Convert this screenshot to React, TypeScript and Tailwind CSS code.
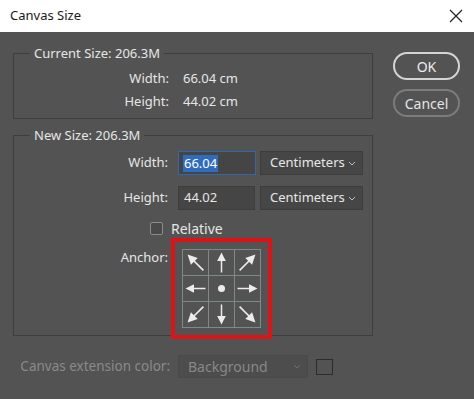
import React from "react";

const font = { fontFamily: '"Noto Sans", "Open Sans", sans-serif' };

function Arrow({ angle, long }: { angle: number; long?: boolean }) {
  return (
    <svg width="25" height="25" viewBox="0 0 25 25">
      <g transform={`rotate(${angle} 12.5 12.5)${long ? " translate(12.5 12.5) scale(1.12) translate(-12.5 -12.5)" : ""}`} fill="#ececec" stroke="none">
        <rect x="11.75" y="9" width="1.5" height="13.5" />
        <polygon points="12.5,2.5 8.2,11 16.8,11" />
      </g>
    </svg>
  );
}

function Cell({ children }: { children?: React.ReactNode }) {
  return (
    <div className="bg-[#535353] w-[25px] h-[25px] flex items-center justify-center">{children}</div>
  );
}

function Chevron({ color }: { color: string }) {
  return (
    <svg width="8" height="5" viewBox="0 0 8 5">
      <path d="M1 1 L4 4 L7 1" fill="none" stroke={color} strokeWidth="1" />
    </svg>
  );
}

export default function App() {
  return (
    <div
      className="w-[474px] h-[399px] bg-[#535353] flex flex-col overflow-hidden text-[#e6e6e6] text-[13px]"
      style={font}
    >
      <div className="h-[32px] bg-white flex items-center justify-between pl-[10px] pr-[11px] shrink-0">
        <span className="text-[13px] text-[#1a1a1a]">Canvas Size</span>
        <svg width="14" height="14" viewBox="0 0 14 14">
          <path d="M1 1 L13 13 M13 1 L1 13" stroke="#222" strokeWidth="1.2" />
        </svg>
      </div>

      <div className="flex">
        <div className="ml-[13px] w-[360px] flex flex-col">
          <fieldset className="mt-[12px] border border-[#3e3e3e] px-0 pb-[5px]">
            <legend className="ml-[16px] px-[4px] leading-[18px]">Current Size: 206.3M</legend>
            <div className="flex flex-col pt-[5px]">
              <div className="flex items-center h-[23px]">
                <span className="w-[155px] text-right">Width:</span>
                <span className="ml-[14px]">66.04 cm</span>
              </div>
              <div className="flex items-center h-[23px]">
                <span className="w-[155px] text-right">Height:</span>
                <span className="ml-[14px]">44.02 cm</span>
              </div>
            </div>
          </fieldset>

          <fieldset className="mt-[7px] border border-[#3e3e3e] px-0 pb-[7px]">
            <legend className="ml-[16px] px-[4px] leading-[18px]">New Size: 206.3M</legend>
            <div className="flex flex-col pt-[7px]">
              <div className="flex items-center h-[24px]">
                <span className="w-[154px] text-right">Width:</span>
                <div className="ml-[10px] w-[78px] h-[24px] bg-[#454545] border border-[#3467a8] flex items-center pl-[4px]">
                  <span className="bg-[#2f6cc0] text-white leading-[17px] px-px">66.04</span>
                </div>
                <div className="ml-[4px] w-[103px] h-[24px] bg-[#464646] border border-[#3d3d3d] flex items-center justify-between pl-[9px] pr-[6px]">
                  <span className="text-[13px]">Centimeters</span>
                  <Chevron color="#bdbdbd" />
                </div>
              </div>
              <div className="flex items-center h-[24px] mt-[11px]">
                <span className="w-[154px] text-right">Height:</span>
                <div className="ml-[10px] w-[77px] h-[24px] bg-[#454545] border border-[#3d3d3d] flex items-center pl-[5px]">
                  <span>44.02</span>
                </div>
                <div className="ml-[5px] w-[103px] h-[24px] bg-[#464646] border border-[#3d3d3d] flex items-center justify-between pl-[9px] pr-[6px]">
                  <span className="text-[13px]">Centimeters</span>
                  <Chevron color="#bdbdbd" />
                </div>
              </div>
              <div className="flex items-center h-[18px] mt-[9px]">
                <div className="ml-[136px] w-[13px] h-[13px] border border-[#8c8c8c] rounded-[2px] bg-[#4a4a4a]" />
                <span className="ml-[8px] text-[14px]">Relative</span>
              </div>
              <div className="flex items-start mt-[12px]">
                <span className="w-[154px] text-right leading-[16px]">Anchor:</span>
                <div className="ml-[14px] relative">
                  <div className="absolute -inset-[11px] border-[4px] border-[#dc1418]" />
                  <div className="grid grid-cols-3 gap-px p-px bg-[#7d8a88] w-[79px]">
                    <Cell><Arrow angle={-45} long /></Cell>
                    <Cell><Arrow angle={0} /></Cell>
                    <Cell><Arrow angle={45} long /></Cell>
                    <Cell><Arrow angle={-90} /></Cell>
                    <Cell>
                      <div className="w-[7px] h-[7px] rounded-full bg-[#ececec]" />
                    </Cell>
                    <Cell><Arrow angle={90} /></Cell>
                    <Cell><Arrow angle={-135} long /></Cell>
                    <Cell><Arrow angle={180} /></Cell>
                    <Cell><Arrow angle={135} long /></Cell>
                  </div>
                </div>
              </div>
            </div>
          </fieldset>

          <div className="flex items-center mt-[19px]">
            <span className="w-[157px] text-right text-[#8a8a8a] text-[13.5px] whitespace-nowrap">Canvas extension color:</span>
            <div className="ml-[8px] w-[130px] h-[23px] bg-[#4d4d4d] border border-[#4a4a4a] flex items-center justify-between pl-[9px] pr-[6px]">
              <span className="text-[14px] text-[#888]">Background</span>
              <Chevron color="#6f6f6f" />
            </div>
            <div className="ml-[8px] w-[17px] h-[16px] border border-[#2c2c2c]" />
          </div>
        </div>

        <div className="ml-[20px] mt-[20px] flex flex-col gap-[9px]">
          <div className="w-[67px] h-[28px] rounded-full border-2 border-[#d4d4d4] flex items-center justify-center text-[14px] text-[#ececec]">
            OK
          </div>
          <div className="w-[67px] h-[28px] rounded-full border-2 border-[#7c7c7c] flex items-center justify-center text-[14px] text-[#e4e4e4]">
            Cancel
          </div>
        </div>
      </div>
    </div>
  );
}
